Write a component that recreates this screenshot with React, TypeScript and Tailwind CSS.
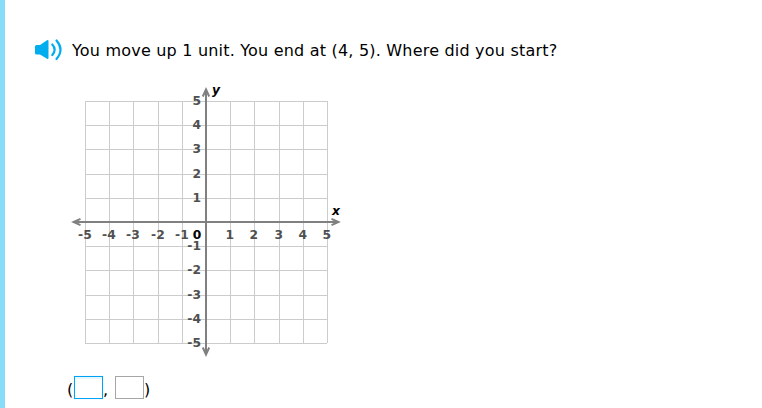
const XS = [85, 109, 133, 158, 182, 230, 254, 279, 303, 327];
const YS = [101, 125, 149, 174, 198, 246, 270, 295, 319, 343];
const VALUES = [-5, -4, -3, -2, -1, 1, 2, 3, 4, 5];

function SpeakerIcon() {
  return (
    <svg width="27" height="22" viewBox="0 0 27 22" className="block shrink-0" fill="none">
      <path d="M1.5 6H5L12 1.2Q13.5 .3 13.5 2V19Q13.5 20.7 12 19.8L5 15.5H1.5Q0 15.5 0 14V7.500Q0 6 1.5 6Z" fill="#00aeef" />
      <path d="M17.300 5.500Q22 10.500 17.300 16M21.500 1.500Q29.500 10.500 21.500 20" stroke="#00aeef" strokeWidth="2.200" strokeLinecap="round" />
    </svg>
  );
}

function CoordinatePlane() {
  return (
    <svg width="280" height="276" viewBox="68 84 280 276" className="block font-['DejaVu_Sans',Verdana,sans-serif] font-bold">
      <g stroke="#cccccc" strokeWidth="1" shapeRendering="crispEdges">
        {XS.map((x) => (
          <line key={x} x1={x + 0.5} x2={x + 0.5} y1="101" y2="343" />
        ))}
        {YS.map((y) => (
          <line key={y} x1="85" x2="327" y1={y + 0.5} y2={y + 0.5} />
        ))}
      </g>
      <g stroke="#808080" strokeWidth="2" fill="none">
        <path d="M75 222H338M206 90V353" />
        <path d="M80.500 218.800L73.500 222L80.500 225.200" />
        <path d="M331.500 218.800L338.500 222L331.500 225.200" />
        <path d="M202.800 96.500L206 89.500L209.200 96.500" />
        <path d="M202.800 347.500L206 354.500L209.200 347.500" />
      </g>
      <g fill="#505050" fontSize="12.300">
        {VALUES.map((v, i) => (
          <text key={v} x={XS[i]} y="239" textAnchor="middle" letterSpacing="0.2">
            {v}
          </text>
        ))}
        {VALUES.map((v, i) => (
          <text key={v} x="201.300" y={YS[9 - i] + 4} textAnchor="end" letterSpacing="0.2">
            {v}
          </text>
        ))}
      </g>
      <g fontSize="12.300" fill="#000000">
        <text x="197" y="239" textAnchor="middle">0</text>
        <text x="212" y="94" fontStyle="italic">y</text>
        <text x="332" y="215" fontStyle="italic">x</text>
      </g>
    </svg>
  );
}

export default function App() {
  return (
    <div className="h-[408px] overflow-hidden border-l-[5px] border-[#87dcf8] bg-white pt-[39px] font-['DejaVu_Sans',Verdana,sans-serif] text-base text-black">
      <div className="flex h-[22px] items-center pl-[30px]">
        <SpeakerIcon />
        <p className="ml-[10px] pt-[2px] whitespace-nowrap tracking-[0.2px]">
          You move up 1 unit. You end at (4, 5). Where did you start?
        </p>
      </div>
      <div className="mt-[23px] ml-[63px]">
        <CoordinatePlane />
      </div>
      <div className="mt-[16px] ml-[62px] flex items-start">
        <span className="w-[7px] leading-[28px]">(</span>
        <input
          aria-label="x coordinate"
          className="h-[23px] w-[29px] border border-[#00a2f2] shadow-[inset_0_2px_0_#e5f6fe,0_0_1px_#bdeaff] outline-none"
        />
        <span className="w-[12px] leading-[28px]">,</span>
        <input aria-label="y coordinate" className="h-[23px] w-[29px] border border-[#a6a6a6] outline-none" />
        <span className="leading-[28px]">)</span>
      </div>
    </div>
  );
}
